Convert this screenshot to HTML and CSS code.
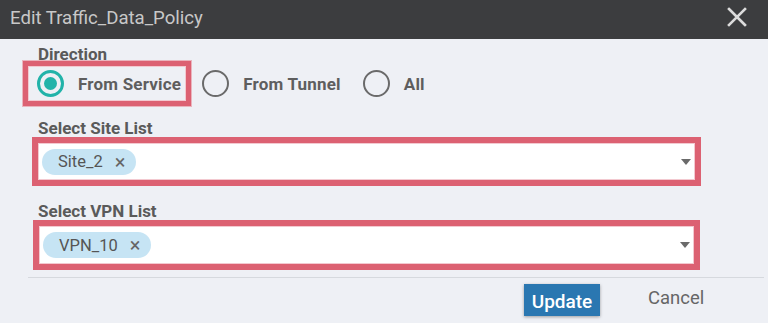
FILE: index.html
```html
<!DOCTYPE html>
<html>
<head>
<meta charset="utf-8">
<link rel="stylesheet" href="styles.css">
</head>
<body>
<div class="dialog">
  <div class="header">
    <span class="title">Edit Traffic_Data_Policy</span>
    <svg class="close" width="20" height="20" viewBox="0 0 20 20"><path d="M2 2 L18 18 M18 2 L2 18" stroke="#dcdcdc" stroke-width="2.6" stroke-linecap="square"/></svg>
  </div>
  <div class="content">
    <div class="label label-dir">Direction</div>
    <div class="radio-row">
      <div class="radio-option highlight">
        <span class="radio checked"><span class="dot"></span></span>
        <span class="radio-text">From Service</span>
      </div>
      <div class="radio-option">
        <span class="radio"></span>
        <span class="radio-text">From Tunnel</span>
      </div>
      <div class="radio-option">
        <span class="radio"></span>
        <span class="radio-text">All</span>
      </div>
    </div>
    <div class="label label-site">Select Site List</div>
    <div class="select">
      <span class="chip">Site_2<span class="x">×</span></span>
      <span class="caret"></span>
    </div>
    <div class="label label-vpn">Select VPN List</div>
    <div class="select select-vpn">
      <span class="chip">VPN_10<span class="x">×</span></span>
      <span class="caret"></span>
    </div>
  </div>
  <div class="divider"></div>
  <div class="footer">
    <button class="btn-update">Update</button>
    <button class="btn-cancel">Cancel</button>
  </div>
</div>
</body>
</html>
```
FILE: styles.css
```css
html, body {
  margin: 0;
  padding: 0;
}
body {
  width: 768px;
  height: 323px;
  overflow: hidden;
  background: #eef0f5;
  font-family: Roboto, "Liberation Sans", sans-serif;
}
.dialog {
  width: 768px;
  height: 323px;
  background: #eef0f5;
}
.header {
  height: 39px;
  background: #3c3d3f;
  display: flex;
  align-items: center;
  justify-content: space-between;
  padding: 0 21px 0 10px;
  box-sizing: border-box;
}
.title {
  color: #c8c8c8;
  font-size: 18.6px;
  line-height: 39px;
  margin-top: -3px;
}
.close {
  display: block;
  margin-top: -6px;
}
.content {
  padding: 0 67px 0 32px;
}
.label {
  font-size: 17px;
  font-weight: 700;
  color: #5a5a5a;
  line-height: 18px;
  padding-left: 6px;
}
.label-dir {
  margin-top: 6px;
}
.radio-row {
  display: flex;
  align-items: center;
  margin-left: -9px;
  margin-top: -2px;
  height: 45px;
}
.radio-option {
  display: flex;
  align-items: center;
  gap: 14px;
  margin-right: 22px;
}
.radio-option.highlight {
  border: 5px solid #dc6172;
  box-shadow: inset 0 0 0 1px #f3c9d0, 0 0 0 1px #eab4bd;
  height: 35px;
  padding: 0 5px 0 9px;
  margin-right: 11px;
}
.radio {
  width: 27px;
  height: 27px;
  box-sizing: border-box;
  border: 2.5px solid #6a6a6a;
  border-radius: 50%;
  display: flex;
  align-items: center;
  justify-content: center;
}
.radio.checked {
  border: 3px solid #22b3a9;
}
.dot {
  width: 13px;
  height: 13px;
  border-radius: 50%;
  background: #22b3a9;
}
.radio-text {
  font-size: 17px;
  font-weight: 700;
  color: #5e5e5e;
  letter-spacing: 0.2px;
}
.label-site {
  margin-top: 13px;
}
.select {
  height: 49px;
  box-sizing: border-box;
  border: 6px solid #dc6172;
  background: #fff;
  box-shadow: inset 0 0 0 1px #f3c9d0;
  display: flex;
  align-items: center;
  justify-content: space-between;
  padding: 0 4px 0 4px;
  margin-top: 0;
}
.select-vpn {
  margin-left: 1px;
  margin-right: 1px;
  height: 50px;
}
.label-vpn {
  margin-top: 16px;
}
.chip {
  background: #c6e4f4;
  border-radius: 13px;
  height: 26px;
  display: flex;
  align-items: center;
  padding: 0 11px 0 16px;
  font-size: 16.5px;
  color: #555;
}
.chip .x {
  margin-left: 12px;
  font-size: 20px;
  color: #666;
}
.caret {
  width: 0;
  height: 0;
  border-left: 5px solid transparent;
  border-right: 5px solid transparent;
  border-top: 6px solid #6a6a6a;
}
.divider {
  height: 1px;
  background: #d6d9de;
  margin: 7px 4px 0 28px;
}
.footer {
  display: flex;
  align-items: center;
  padding-left: 524px;
  margin-top: 6px;
}
.btn-update {
  width: 76px;
  height: 32px;
  background: #2a77b1;
  color: #fff;
  border: none;
  font-family: Roboto, "Liberation Sans", sans-serif;
  font-size: 19px;
  font-weight: 500;
  padding: 2px 0 0 0;
  box-shadow: 0 1px 3px rgba(0,0,0,0.35);
}
.btn-cancel {
  background: none;
  border: none;
  font-family: Roboto, "Liberation Sans", sans-serif;
  font-size: 18.5px;
  color: #666;
  margin-left: 48px;
  padding: 0;
  margin-top: -5px;
}
```
